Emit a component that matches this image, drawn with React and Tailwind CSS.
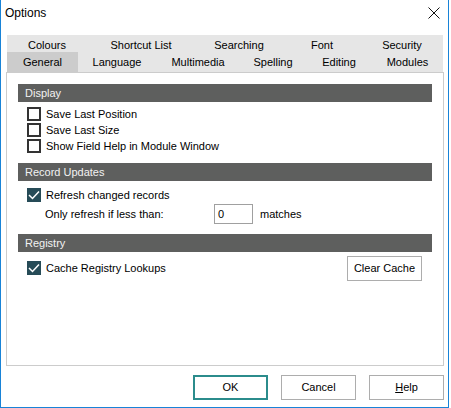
import React, { useState } from 'react';

const font = { fontFamily: '"Liberation Sans", Arial, sans-serif' };

const rowOne = [
  { label: 'Colours', w: 'w-[80px]' },
  { label: 'Shortcut List', w: 'w-[108px]' },
  { label: 'Searching', w: 'w-[88px]' },
  { label: 'Font', w: 'w-[78px]' },
  { label: 'Security', w: 'w-[82px]' },
];

const rowTwo = [
  { label: 'General', w: 'w-[71px]' },
  { label: 'Language', w: 'w-[78px]' },
  { label: 'Multimedia', w: 'w-[84px]' },
  { label: 'Spelling', w: 'w-[66px]' },
  { label: 'Editing', w: 'w-[66px]' },
  { label: 'Modules', w: 'w-[71px]' },
];

function Check({ checked, onClick, label }) {
  return (
    <div className="flex items-center h-[16px] cursor-default" onClick={onClick}>
      {checked ? (
        <div className="w-[14px] h-[14px] bg-[#264b57] flex items-center justify-center">
          <svg width="14" height="14" viewBox="0 0 14 14">
            <polyline points="2,7 5.5,10.5 12,3.5" fill="none" stroke="#fff" strokeWidth="1.5" />
          </svg>
        </div>
      ) : (
        <div className="w-[14px] h-[14px] border-2 border-[#333333] bg-white" />
      )}
      <span className="ml-[5px] text-[11px] text-black">{label}</span>
    </div>
  );
}

function Bar({ children }) {
  return (
    <div className="h-[18px] bg-[#5e5f5e] text-[#f2f2f2] text-[11px] pl-[7px] flex items-center">
      {children}
    </div>
  );
}

export default function App() {
  const [tab, setTab] = useState('General');
  const [lastPos, setLastPos] = useState(false);
  const [lastSize, setLastSize] = useState(false);
  const [fieldHelp, setFieldHelp] = useState(false);
  const [refresh, setRefresh] = useState(true);
  const [cache, setCache] = useState(true);

  return (
    <div style={font} className="w-[449px] h-[408px] bg-white border-l border-r border-b border-[#1883d7] flex flex-col text-black">
      {/* Title bar */}
      <div className="h-[35px] flex items-start justify-between pt-[6px] pl-[4px] pr-[6px]">
        <span className="text-[12px] leading-[14px]">Options</span>
        <svg width="12" height="12" viewBox="0 0 12 12" className="mt-[1px] mr-[2px]">
          <path d="M0.5 0.5 L11.5 11.5 M11.5 0.5 L0.5 11.5" stroke="#111" strokeWidth="1" />
        </svg>
      </div>

      {/* Tabs */}
      <div className="ml-[6px] w-[436px] bg-[#e6e6e6] text-[11px]">
        <div className="flex h-[17px]">
          {rowOne.map(t => (
            <div key={t.label} onClick={() => setTab(t.label)}
              className={`${t.w} flex items-center justify-center pt-[3px] ${tab === t.label ? 'bg-[#cccccc]' : ''}`}>
              {t.label}
            </div>
          ))}
        </div>
        <div className="flex h-[20px]">
          {rowTwo.map(t => (
            <div key={t.label} onClick={() => setTab(t.label)}
              className={`${t.w} flex items-center justify-center pt-[1px] ${tab === t.label ? 'bg-[#cccccc]' : ''}`}>
              {t.label}
            </div>
          ))}
        </div>
      </div>

      {/* Panel */}
      <div className="ml-[5px] w-[438px] h-[294px] border border-[#cccccc] pt-[11px] px-[11px]">
        <Bar>Display</Bar>
        <div className="pl-[9px] pt-[4px]">
          <Check checked={lastPos} onClick={() => setLastPos(v => !v)} label="Save Last Position" />
          <Check checked={lastSize} onClick={() => setLastSize(v => !v)} label="Save Last Size" />
          <Check checked={fieldHelp} onClick={() => setFieldHelp(v => !v)} label="Show Field Help in Module Window" />
        </div>

        <div className="mt-[9px]">
          <Bar>Record Updates</Bar>
        </div>
        <div className="pl-[9px] pt-[6px]">
          <Check checked={refresh} onClick={() => setRefresh(v => !v)} label="Refresh changed records" />
          <div className="flex items-center h-[20px] mt-[1px] text-[11px]">
            <span className="ml-[18px] w-[169px]">Only refresh if less than:</span>
            <div className="w-[39px] h-[20px] border border-[#a0a0a0] pl-[3px] flex items-center">0</div>
            <span className="ml-[7px]">matches</span>
          </div>
        </div>

        <div className="mt-[10px]">
          <Bar>Registry</Bar>
        </div>
        <div className="pl-[9px] pr-[10px] pt-[4px] flex justify-between">
          <div className="pt-[4px]">
            <Check checked={cache} onClick={() => setCache(v => !v)} label="Cache Registry Lookups" />
          </div>
          <button className="w-[75px] h-[25px] border border-[#adadad] bg-white text-[11px]">Clear Cache</button>
        </div>
      </div>

      {/* Buttons */}
      <div className="flex justify-end gap-[13px] mt-[9px] pr-[4px]">
        <button className="w-[75px] h-[25px] border-2 border-[#2b8c8c] bg-white text-[11px]">OK</button>
        <button className="w-[75px] h-[25px] border border-[#adadad] bg-white text-[11px]">Cancel</button>
        <button className="w-[75px] h-[25px] border border-[#adadad] bg-white text-[11px]"><span className="underline">H</span>elp</button>
      </div>
    </div>
  );
}
